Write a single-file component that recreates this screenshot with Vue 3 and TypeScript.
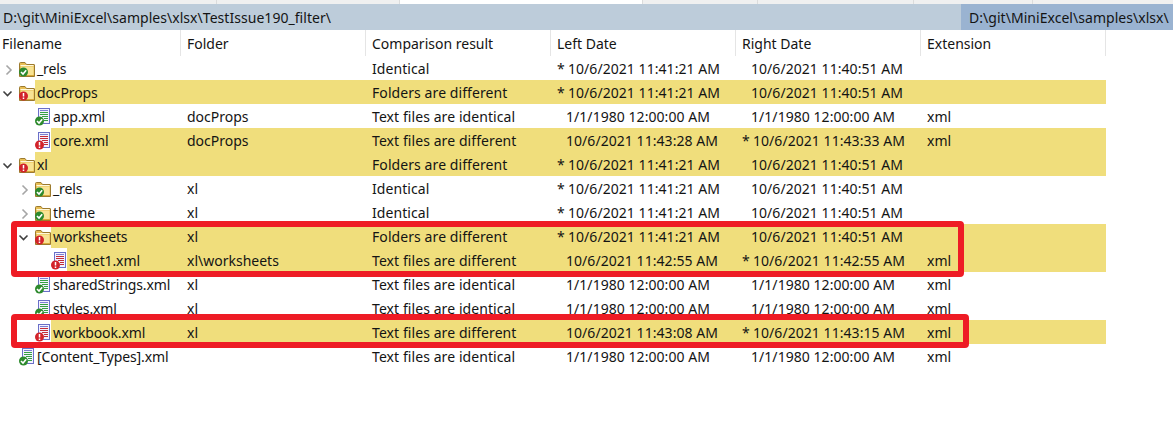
<script setup lang="ts">
interface Row {
  name: string
  level: number
  kind: 'folder' | 'file'
  expander?: 'open' | 'closed'
  folder: string
  result: string
  left: string
  leftStar?: boolean
  right: string
  rightStar?: boolean
  ext: string
  diff: boolean
}

const OLD = '1/1/1980 12:00:00 AM'
const IDENT = 'Identical'
const FDIFF = 'Folders are different'
const TDIFF = 'Text files are different'
const TSAME = 'Text files are identical'
const L = '10/6/2021 11:41:21 AM'
const R = '10/6/2021 11:40:51 AM'

const rows: Row[] = [
  { name: '_rels', level: 0, kind: 'folder', expander: 'closed', folder: '', result: IDENT, left: L, leftStar: true, right: R, ext: '', diff: false },
  { name: 'docProps', level: 0, kind: 'folder', expander: 'open', folder: '', result: FDIFF, left: L, leftStar: true, right: R, ext: '', diff: true },
  { name: 'app.xml', level: 1, kind: 'file', folder: 'docProps', result: TSAME, left: OLD, right: OLD, ext: 'xml', diff: false },
  { name: 'core.xml', level: 1, kind: 'file', folder: 'docProps', result: TDIFF, left: '10/6/2021 11:43:28 AM', right: '10/6/2021 11:43:33 AM', rightStar: true, ext: 'xml', diff: true },
  { name: 'xl', level: 0, kind: 'folder', expander: 'open', folder: '', result: FDIFF, left: L, leftStar: true, right: R, ext: '', diff: true },
  { name: '_rels', level: 1, kind: 'folder', expander: 'closed', folder: 'xl', result: IDENT, left: L, leftStar: true, right: R, ext: '', diff: false },
  { name: 'theme', level: 1, kind: 'folder', expander: 'closed', folder: 'xl', result: IDENT, left: L, leftStar: true, right: R, ext: '', diff: false },
  { name: 'worksheets', level: 1, kind: 'folder', expander: 'open', folder: 'xl', result: FDIFF, left: L, leftStar: true, right: R, ext: '', diff: true },
  { name: 'sheet1.xml', level: 2, kind: 'file', folder: 'xl\\worksheets', result: TDIFF, left: '10/6/2021 11:42:55 AM', right: '10/6/2021 11:42:55 AM', rightStar: true, ext: 'xml', diff: true },
  { name: 'sharedStrings.xml', level: 1, kind: 'file', folder: 'xl', result: TSAME, left: OLD, right: OLD, ext: 'xml', diff: false },
  { name: 'styles.xml', level: 1, kind: 'file', folder: 'xl', result: TSAME, left: OLD, right: OLD, ext: 'xml', diff: false },
  { name: 'workbook.xml', level: 1, kind: 'file', folder: 'xl', result: TDIFF, left: '10/6/2021 11:43:08 AM', right: '10/6/2021 11:43:15 AM', rightStar: true, ext: 'xml', diff: true },
  { name: '[Content_Types].xml', level: 0, kind: 'file', folder: '', result: TSAME, left: OLD, right: OLD, ext: 'xml', diff: false },
]

const columns = ['Folder', 'Comparison result', 'Left Date', 'Right Date', 'Extension']
const leftPath = 'D:\\git\\MiniExcel\\samples\\xlsx\\TestIssue190_filter\\'
const rightPath = 'D:\\git\\MiniExcel\\samples\\xlsx\\'
</script>

<template>
  <div class="app">
    <div class="strip">
      <div class="tab t1"></div>
      <div class="tab t2"></div>
      <div class="tab t3 cur"></div>
      <div class="tab t4"></div>
      <div class="tab t5"></div>
      <div class="tab t6"></div>
    </div>
    <div class="paths">
      <div class="path">{{ leftPath }}</div>
      <div class="path active">{{ rightPath }}</div>
    </div>
    <div class="head">
      <div class="hcell first">Filename</div>
      <div v-for="c in columns" :key="c" class="hcell">{{ c }}</div>
    </div>
    <div class="list">
      <div v-for="(r, i) in rows" :key="i" class="row">
        <div class="lead" :style="{ paddingLeft: r.level * 16 + 'px' }">
          <span class="exp">
            <svg v-if="r.expander === 'closed'" width="16" height="16" viewBox="0 0 16 16">
              <path d="M6.5 3.5 L11 8 L6.5 12.5" fill="none" stroke="#a6a6a6" stroke-width="1.6" />
            </svg>
            <svg v-else-if="r.expander === 'open'" width="16" height="16" viewBox="0 0 16 16">
              <path d="M3.5 5.5 L7.5 9.5 L11.5 5.5" fill="none" stroke="#404040" stroke-width="1.6" />
            </svg>
          </span>
          <svg class="ico" width="16" height="18" viewBox="0 0 16 18">
            <template v-if="r.kind === 'folder'">
              <path d="M0.5 16.5 V3.5 Q0.5 2.5 1.5 2.5 H6 L7.5 4.5 H15 Q15.5 4.5 15.5 5 V16.5 Z" fill="#e8bf55" stroke="#9c7a2e" />
              <path d="M2 6.5 H14.5 V15.5 H2 Z" fill="#f8e394" />
              <path d="M1.5 5.5 H14.5" stroke="#fff8dc" fill="none" />
              <path d="M6 15.5 H15" stroke="#d9a93a" fill="none" />
            </template>
            <template v-else>
              <rect x="3.5" y="0.5" width="11" height="15" fill="#f3f2ff" stroke="#6a6fc8" />
              <path d="M5 2.5 H13" stroke="#7d7fd0" fill="none" />
              <path d="M5 4.5 H13 M5 6.5 H13 M7 8.5 H13 M9 10.5 H13 M9 12.5 H13" :stroke="r.diff ? '#c42b38' : '#35a043'" fill="none" />
            </template>
            <template v-if="r.diff">
              <circle :cx="4.5" :cy="r.kind === 'folder' ? 12 : 13" r="4.5" fill="#d2232a" />
              <path v-if="r.kind === 'folder'" d="M4.5 9 V12.4 M4.5 13.4 V15" stroke="#fff" stroke-width="1.5" fill="none" />
              <path v-else d="M4.5 10 V13.4 M4.5 14.4 V16" stroke="#fff" stroke-width="1.5" fill="none" />
            </template>
            <template v-else>
              <circle :cx="4.5" :cy="r.kind === 'folder' ? 12 : 13" r="4.5" fill="#2d8a2d" />
              <path v-if="r.kind === 'folder'" d="M2 12 L4 14 L7.2 10.2" stroke="#fff" stroke-width="1.6" fill="none" />
              <path v-else d="M2 13 L4 15 L7.2 11.2" stroke="#fff" stroke-width="1.6" fill="none" />
            </template>
          </svg>
        </div>
        <div class="body" :class="{ diff: r.diff }">
          <div class="name">{{ r.name }}</div>
          <div class="cell">{{ r.folder }}</div>
          <div class="cell res">{{ r.result }}</div>
          <div class="cell date"><span class="star" :class="{ on: r.leftStar }">{{ r.leftStar ? '*' : '' }}</span>{{ r.left }}</div>
          <div class="cell date"><span class="star" :class="{ on: r.rightStar }">{{ r.rightStar ? '*' : '' }}</span>{{ r.right }}</div>
          <div class="cell">{{ r.ext }}</div>
        </div>
      </div>
      <div class="mark m1"></div>
      <div class="mark m2"></div>
    </div>
  </div>
</template>

<style>
html, body { margin: 0; background: #fff; }
</style>

<style scoped>
.app {
  width: 1173px;
  height: 430px;
  overflow: hidden;
  background: #fff;
  color: #141414;
  font-family: "Noto Sans", "Open Sans", sans-serif;
  font-size: 14px;
}
.strip { display: flex; height: 4px; background: #f0f0f0; }
.tab { height: 4px; box-sizing: border-box; border-right: 1px solid #dcdcdc; }
.tab.cur { background: #fff; }
.t1 { width: 217px; }
.t2 { width: 183px; }
.t3 { width: 243px; }
.t4 { width: 115px; }
.t5 { width: 156px; }
.t6 { width: 119px; }
.paths {
  display: flex;
  height: 26px;
  background: #bdccda;
  overflow: hidden;
}
.path {
  flex: 0 0 961px;
  box-sizing: border-box;
  padding-left: 3px;
  line-height: 28px;
  letter-spacing: 0.04px;
  white-space: nowrap;
}
.path.active { flex: 0 0 212px; padding-left: 8px; background: #9ab3d1; }
.head { display: flex; height: 26px; width: 1106px; }
.hcell {
  flex: 0 0 185px;
  box-sizing: border-box;
  padding-left: 6px;
  line-height: 28px;
  border-right: 1px solid #e5e5e5;
}
.hcell.first { flex: 0 0 181px; padding-left: 2px; }
.list { position: relative; width: 1173px; }
.row { display: flex; height: 24px; width: 1106px; line-height: 26px; white-space: nowrap; }
.lead { display: flex; flex: 0 0 auto; align-items: flex-start; height: 24px; padding-top: 4px; box-sizing: border-box; }
.exp { display: block; width: 19px; height: 16px; }
.ico { display: block; overflow: visible; }
.body { display: flex; flex: 1; min-width: 0; height: 24px; }
.body.diff { background: #f0de7c; }
.name { flex: 1; min-width: 0; padding-left: 2px; letter-spacing: -0.12px; }
.cell { flex: 0 0 185px; box-sizing: border-box; padding-left: 6px; }
.res { letter-spacing: 0.08px; }
.date { letter-spacing: 0.05px; }
.star { display: inline-block; width: 9px; }
.star.on { width: 11px; }
.mark {
  position: absolute;
  box-sizing: border-box;
  border: 6px solid #ee1c25;
  border-radius: 4px;
  left: 11px;
}
.m1 { top: 165px; width: 953px; height: 56px; }
.m2 { top: 258px; width: 958px; height: 34px; }
</style>
